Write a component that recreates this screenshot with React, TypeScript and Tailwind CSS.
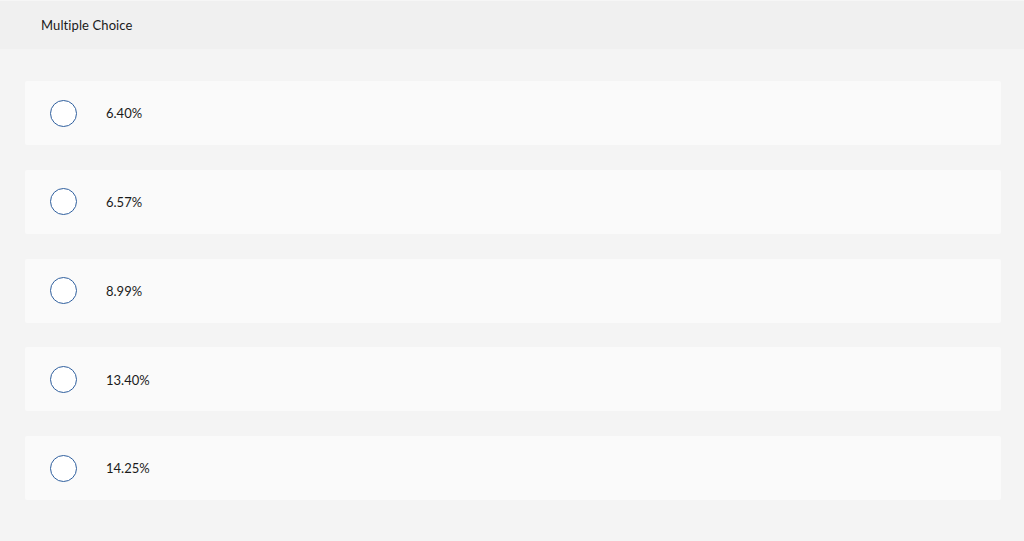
import React from 'react';

const choices = ['6.40%', '6.57%', '8.99%', '13.40%', '14.25%'];

const App = () => {
  return (
    <div className="min-h-[541px] bg-[#f4f4f4] font-['Lato','Open_Sans',sans-serif] text-[#1a1a1a]">
      {/* Header */}
      <div className="h-[49px] bg-[#f0f0f0] border-t border-[#f6f6f6] flex items-center pl-[41px] pt-[2px]">
        <span className="text-[13px] tracking-[0.1px]">Multiple Choice</span>
      </div>

      {/* Choices */}
      <div className="pt-[32px] pl-[25px] pr-[23px] flex flex-col gap-[24.75px]">
        {choices.map((c) => (
          <div key={c} className="h-[64px] bg-[#fafafa] rounded-[2px] flex items-center pl-[25px]">
            <div className="w-[27px] h-[27px] rounded-full border border-[#2f5f9e] bg-white" />
            <span className="ml-[29px] pt-[2px] text-[13px]">{c}</span>
          </div>
        ))}
      </div>
    </div>
  );
};

export default App;
